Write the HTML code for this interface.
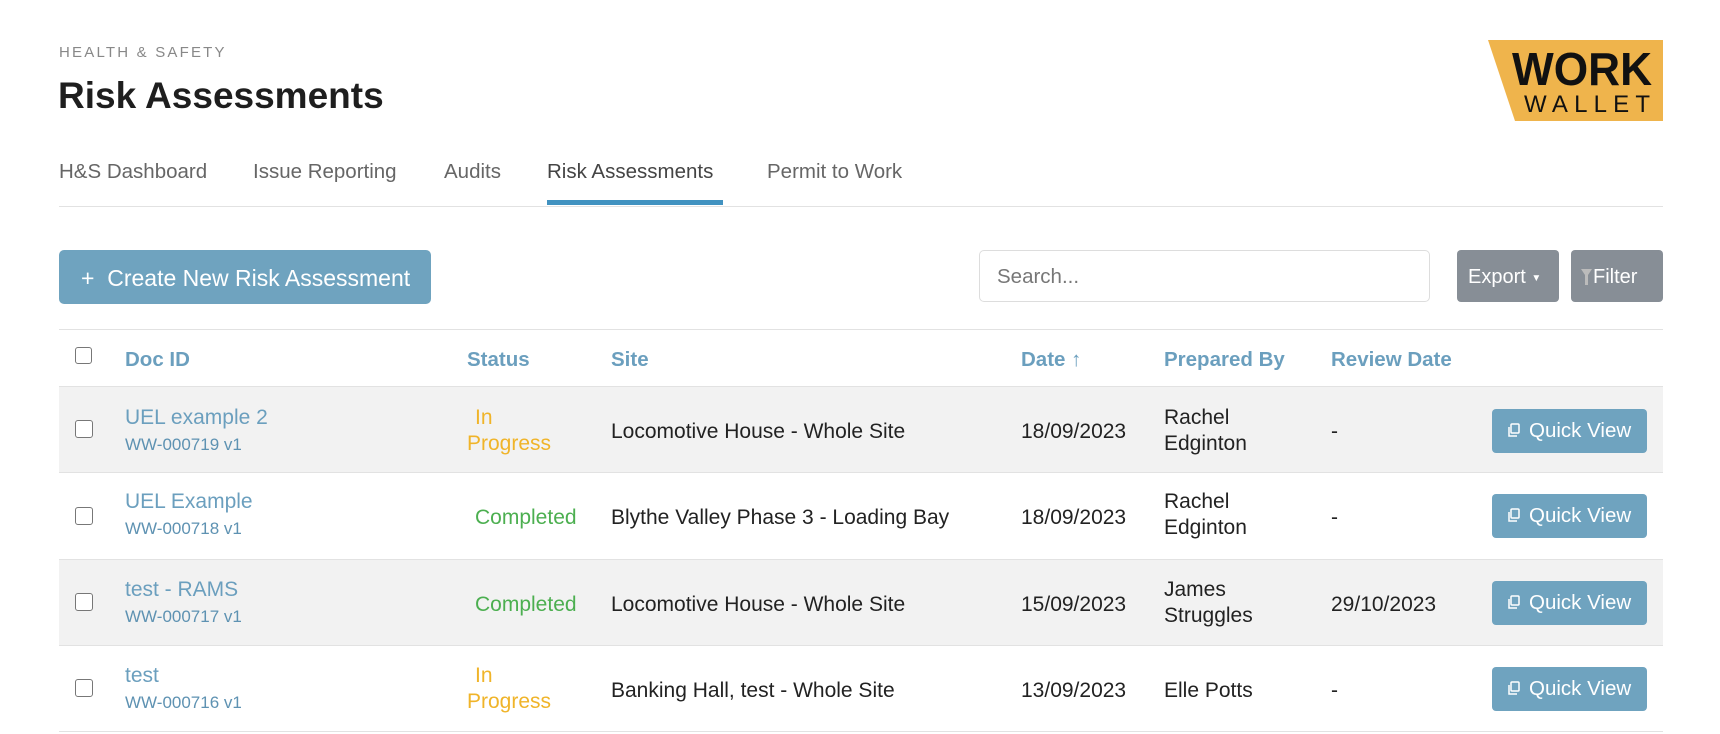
<!DOCTYPE html>
<html><head><meta charset="utf-8"><style>
*{box-sizing:border-box;margin:0;padding:0}
body{width:1720px;height:734px;overflow:hidden;background:#fff;font-family:"Liberation Sans",Arial,sans-serif;position:relative;color:#222}
.a{position:absolute;white-space:nowrap}
.tab{font-size:20.5px;color:#666;top:160px}
.hd{top:348px;font-size:20.5px;font-weight:bold;color:#6b9fbe}
.row{position:absolute;left:59px;width:1604px;height:86px;border-bottom:1px solid #e2e2e2}
.row.g{background:#f2f2f2}
.cb{position:absolute;left:16px;width:18px;height:18px;border:1.5px solid #777;border-radius:3px;background:#fff}
.c{position:absolute;font-size:21px;line-height:26px;margin-top:2px}
.lk{color:#6b9fbe}
.sub{font-size:17px;color:#5e92b2}
.qv{position:absolute;left:1433px;width:155px;height:44px;background:#6fa3bf;border-radius:4px;color:#fff;font-size:20.5px;line-height:44px;padding-left:37px}
.qv svg{position:absolute;left:14px;top:14px}
</style></head><body>
<div class="a" style="left:59px;top:44px;font-size:15px;letter-spacing:2.2px;color:#888">HEALTH &amp; SAFETY</div>
<div class="a" style="left:58px;top:75px;font-size:37px;font-weight:bold;color:#1e1e1e">Risk Assessments</div>
<svg class="a" style="left:1488px;top:40px" width="175" height="81" viewBox="0 0 175 81">
<polygon points="0,0 175,0 175,81 27,81" fill="#efb44c"/>
<text x="24" y="45" font-family="Liberation Sans,sans-serif" font-weight="bold" font-size="46" fill="#111" textLength="140" lengthAdjust="spacingAndGlyphs">WORK</text>
<text x="36" y="72" font-family="Liberation Sans,sans-serif" font-size="24" fill="#111" textLength="126" lengthAdjust="spacing">WALLET</text>
</svg>
<div class="a tab" style="left:59px">H&amp;S Dashboard</div>
<div class="a tab" style="left:253px">Issue Reporting</div>
<div class="a tab" style="left:444px">Audits</div>
<div class="a tab" style="left:547px;color:#444">Risk Assessments</div>
<div class="a tab" style="left:767px">Permit to Work</div>
<div class="a" style="left:547px;top:200px;width:176px;height:5px;background:#4192c0"></div>
<div class="a" style="left:59px;top:206px;width:1604px;height:1px;background:#e2e2e2"></div>
<div class="a" style="left:59px;top:250px;width:372px;height:54px;background:#6fa3bf;border-radius:5px;color:#fff;font-size:23px;line-height:56px;padding-left:22px">+&nbsp; Create New Risk Assessment</div>
<div class="a" style="left:979px;top:250px;width:451px;height:52px;border:1px solid #ddd;border-radius:5px;font-size:20.5px;color:#777;line-height:52px;padding-left:17px">Search...</div>
<div class="a" style="left:1457px;top:250px;width:102px;height:52px;background:#878e96;border-radius:4px;color:#fff;font-size:20px;line-height:54px;padding-left:11px">Export <span style="font-size:10px;vertical-align:2px">▼</span></div>
<div class="a" style="left:1571px;top:250px;width:92px;height:52px;background:#878e96;border-radius:4px;color:#fff;font-size:20px;line-height:54px;padding-left:9px"><svg width="13" height="18" viewBox="0 0 13 18" style="vertical-align:-3px"><path d="M1 1h11L8 7v10H5V7z" fill="#bbb"/></svg>Filter</div>
<div class="a" style="left:59px;top:329px;width:1604px;height:1px;background:#e2e2e2"></div>
<div class="cb" style="left:75px;top:347px;width:17px;height:17px"></div>
<div class="a hd" style="left:125px">Doc ID</div>
<div class="a hd" style="left:467px">Status</div>
<div class="a hd" style="left:611px">Site</div>
<div class="a hd" style="left:1021px">Date ↑</div>
<div class="a hd" style="left:1164px">Prepared By</div>
<div class="a hd" style="left:1331px">Review Date</div>
<div class="a" style="left:59px;top:386px;width:1604px;height:1px;background:#e2e2e2"></div>

<div class="row g" style="top:387px">
<div class="cb" style="top:33px"></div>
<div class="c lk" style="left:66px;top:16px">UEL example 2<br><span class="sub">WW-000719 v1</span></div>
<div class="c" style="left:408px;top:16px;color:#f0b429;padding-left:8px">In<br><span style="margin-left:-8px">Progress</span></div>
<div class="c" style="left:552px;top:30px">Locomotive House - Whole Site</div>
<div class="c" style="left:962px;top:30px">18/09/2023</div>
<div class="c" style="left:1105px;top:16px">Rachel<br>Edginton</div>
<div class="c" style="left:1272px;top:30px">-</div>
<div class="qv" style="top:22px"><svg width="15" height="15" viewBox="0 0 15 15" fill="none" stroke="#fff" stroke-width="1.5"><rect x="5" y="1" width="8" height="9" rx="1"/><path d="M3 4v9h8"/></svg>Quick View</div>
</div>
<div class="row" style="top:474px">
<div class="cb" style="top:33px"></div>
<div class="c lk" style="left:66px;top:13px">UEL Example<br><span class="sub">WW-000718 v1</span></div>
<div class="c" style="left:416px;top:29px;color:#4caf50">Completed</div>
<div class="c" style="left:552px;top:29px">Blythe Valley Phase 3 - Loading Bay</div>
<div class="c" style="left:962px;top:29px">18/09/2023</div>
<div class="c" style="left:1105px;top:13px">Rachel<br>Edginton</div>
<div class="c" style="left:1272px;top:29px">-</div>
<div class="qv" style="top:20px"><svg width="15" height="15" viewBox="0 0 15 15" fill="none" stroke="#fff" stroke-width="1.5"><rect x="5" y="1" width="8" height="9" rx="1"/><path d="M3 4v9h8"/></svg>Quick View</div>
</div>
<div class="row g" style="top:560px">
<div class="cb" style="top:33px"></div>
<div class="c lk" style="left:66px;top:15px">test - RAMS<br><span class="sub">WW-000717 v1</span></div>
<div class="c" style="left:416px;top:30px;color:#4caf50">Completed</div>
<div class="c" style="left:552px;top:30px">Locomotive House - Whole Site</div>
<div class="c" style="left:962px;top:30px">15/09/2023</div>
<div class="c" style="left:1105px;top:15px">James<br>Struggles</div>
<div class="c" style="left:1272px;top:30px">29/10/2023</div>
<div class="qv" style="top:21px"><svg width="15" height="15" viewBox="0 0 15 15" fill="none" stroke="#fff" stroke-width="1.5"><rect x="5" y="1" width="8" height="9" rx="1"/><path d="M3 4v9h8"/></svg>Quick View</div>
</div>
<div class="row" style="top:646px">
<div class="cb" style="top:33px"></div>
<div class="c lk" style="left:66px;top:15px">test<br><span class="sub">WW-000716 v1</span></div>
<div class="c" style="left:408px;top:15px;color:#f0b429;padding-left:8px">In<br><span style="margin-left:-8px">Progress</span></div>
<div class="c" style="left:552px;top:30px">Banking Hall, test - Whole Site</div>
<div class="c" style="left:962px;top:30px">13/09/2023</div>
<div class="c" style="left:1105px;top:30px">Elle Potts</div>
<div class="c" style="left:1272px;top:30px">-</div>
<div class="qv" style="top:21px"><svg width="15" height="15" viewBox="0 0 15 15" fill="none" stroke="#fff" stroke-width="1.5"><rect x="5" y="1" width="8" height="9" rx="1"/><path d="M3 4v9h8"/></svg>Quick View</div>
</div>
</body></html>
